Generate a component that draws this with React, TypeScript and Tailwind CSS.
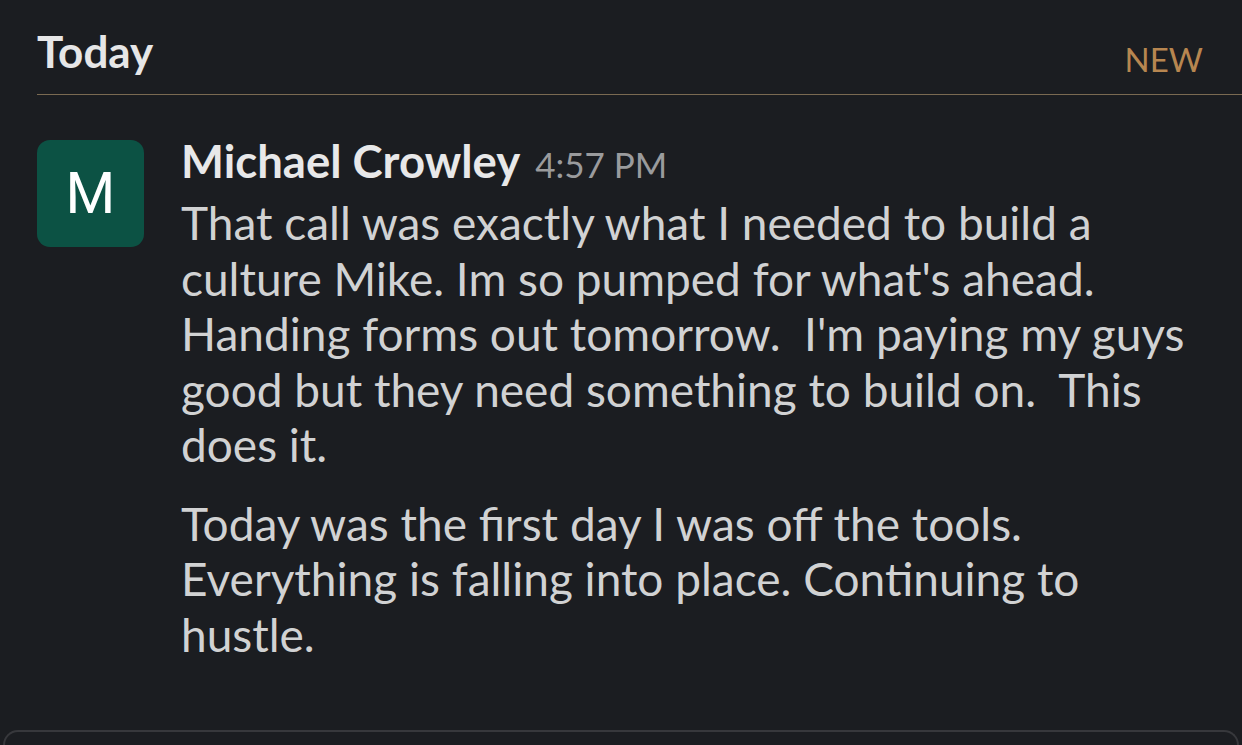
import React from 'react';

const paragraphs = [
  "That call was exactly what I needed to build a culture Mike. Im so pumped for what's ahead. Handing forms out tomorrow.  I'm paying my guys good but they need something to build on.  This does it.",
  'Today was the first day I was off the tools. Everything is falling into place. Continuing to hustle.',
];

const App: React.FC = () => {
  return (
    <div className="w-[1242px] h-[745px] overflow-hidden bg-[#1b1d21] flex flex-col font-['Lato',sans-serif]">
      {/* Day divider */}
      <div className="ml-[37px] pt-[27px] pb-[18px] pr-[39px] flex items-end justify-between border-b border-[#7a6a52]">
        <span className="text-[44px] leading-[49px] font-bold text-[#e6e6e7]">Today</span>
        <span className="text-[33px] leading-[34px] text-[#b78650]">NEW</span>
      </div>

      {/* Message */}
      <div className="flex pt-[45px] pl-[37px]">
        <div className="w-[107px] h-[107px] shrink-0 rounded-[13px] bg-[#0c5244] flex items-center justify-center">
          <span className="text-[57px] leading-none text-white font-['Roboto',sans-serif]">M</span>
        </div>
        <div className="ml-[37px] w-[1020px]">
          <div className="flex items-baseline gap-[15px]">
            <span className="text-[45.5px] leading-[42px] font-bold text-[#e8e8e9]">Michael Crowley</span>
            <span className="text-[35px] leading-[42px] text-[#9a9b9d]">4:57 PM</span>
          </div>
          <div className="mt-[10px] flex flex-col gap-[23px]">
            {paragraphs.map((p, i) => (
              <p key={i} className="text-[46px] leading-[55.5px] text-[#d1d2d3] whitespace-pre-wrap">
                {p}
              </p>
            ))}
          </div>
        </div>
      </div>

      <div className="flex-1" />

      {/* Composer edge */}
      <div className="h-[15px] mx-[3px] rounded-t-[22px] border-2 border-b-0 border-[#37383c]" />
    </div>
  );
};

export default App;
